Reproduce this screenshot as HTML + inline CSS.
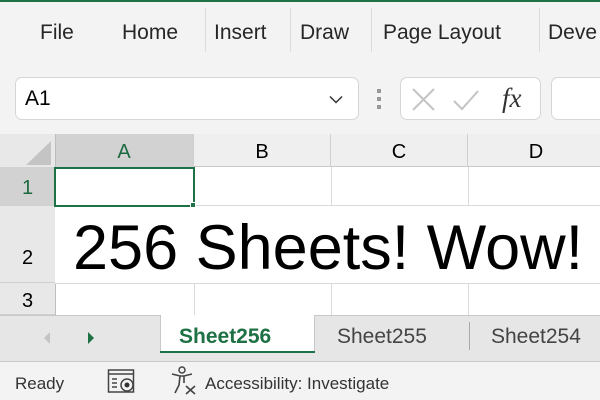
<!DOCTYPE html>
<html><head><style>
*{margin:0;padding:0;box-sizing:border-box}
body{width:600px;height:400px;overflow:hidden;background:#f3f3f3;font-family:"Liberation Sans",sans-serif;position:relative}
.a{position:absolute}
.tab{position:absolute;top:21px;font-size:21px;color:#262626}
.sep{position:absolute;top:8px;width:1px;height:44px;background:#dcdcdc}
.box{position:absolute;background:#fff;border:1px solid #d6d6d6;border-radius:7px}
.ch{position:absolute;top:134px;height:33px;font-size:20px;text-align:center;line-height:36px;color:#000;border-right:1px solid #cfcfcf}
.rh{position:absolute;left:0;width:55px;font-size:20px;text-align:center;color:#000;background:#e8e8e8;border-bottom:1px solid #cfcfcf}
.vl{position:absolute;top:167px;height:148px;width:1px;background:#dadada}
.hl{position:absolute;left:55px;width:545px;height:1px;background:#dadada}
</style></head><body>
<div class="a" style="left:0;top:0;width:600px;height:2px;background:#1e7145"></div>
<div class="tab" style="left:40px">File</div>
<div class="tab" style="left:122px">Home</div>
<div class="sep" style="left:205px"></div>
<div class="tab" style="left:214px">Insert</div>
<div class="sep" style="left:290px"></div>
<div class="tab" style="left:300px">Draw</div>
<div class="sep" style="left:371px"></div>
<div class="tab" style="left:383px">Page Layout</div>
<div class="sep" style="left:539px"></div>
<div class="tab" style="left:548px">Deve</div>

<div class="box" style="left:15px;top:77px;width:344px;height:43px"></div>
<div class="a" style="left:25px;top:87px;font-size:21px;color:#000">A1</div>
<svg class="a" style="left:329px;top:95px" width="14" height="9"><path d="M1 1.5L7 7.5L13 1.5" fill="none" stroke="#333" stroke-width="1.5"/></svg>
<div class="a" style="left:377px;top:89px;width:4px;height:4px;background:#999"></div>
<div class="a" style="left:377px;top:97px;width:4px;height:4px;background:#999"></div>
<div class="a" style="left:377px;top:105px;width:4px;height:4px;background:#999"></div>
<div class="box" style="left:400px;top:77px;width:141px;height:43px"></div>
<svg class="a" style="left:410px;top:86px" width="120" height="28"><path d="M3 3L24 24M24 3L3 24" stroke="#c4c4c4" stroke-width="2"/><path d="M44 15L52 23L68 5" fill="none" stroke="#c4c4c4" stroke-width="2"/></svg>
<div class="a" style="left:502px;top:83px;font-family:'Liberation Serif',serif;font-style:italic;font-size:27px;color:#333">fx</div>
<div class="box" style="left:551px;top:77px;width:60px;height:43px"></div>

<div class="a" style="left:0;top:134px;width:600px;height:181px;background:#fff"></div>
<div class="a" style="left:0;top:134px;width:55px;height:33px;background:#e8e8e8"></div>
<svg class="a" style="left:26px;top:141px" width="26" height="24"><path d="M25 0L25 24L0 24Z" fill="#c4c4c4"/></svg>
<div class="a" style="left:55px;top:134px;width:545px;height:33px;background:#efefef;border-bottom:1px solid #c8c8c8"></div>
<div class="ch" style="left:55px;width:139px;background:#d2d2d2;color:#1e6a40">A</div>
<div class="ch" style="left:194px;width:137px">B</div>
<div class="ch" style="left:331px;width:137px">C</div>
<div class="ch" style="left:468px;width:137px">D</div>
<div class="rh" style="top:167px;height:39px;line-height:42px;background:#d2d2d2;color:#1e6a40">1</div>
<div class="rh" style="top:206px;height:77px;line-height:104px">2</div>
<div class="rh" style="top:283px;height:32px;line-height:36px">3</div>
<div class="a" style="left:55px;top:134px;width:1px;height:181px;background:#bdbdbd"></div>
<div class="vl" style="left:194px"></div>
<div class="vl" style="left:331px"></div>
<div class="vl" style="left:468px"></div>
<div class="hl" style="top:205px"></div>
<div class="hl" style="top:283px"></div>
<div class="a" style="left:55px;top:206px;width:545px;height:77px;background:#fff"></div>
<div class="a" style="left:73px;top:210px;font-size:63px;color:#000;white-space:nowrap;line-height:76px;letter-spacing:0px">256 Sheets! Wow!</div>
<div class="a" style="left:54px;top:167px;width:141px;height:40px;border:2px solid #1e7145"></div>
<div class="a" style="left:190px;top:202px;width:6px;height:6px;background:#1e7145;border:1px solid #fff"></div>

<div class="a" style="left:0;top:315px;width:600px;height:47px;background:#e6e6e6;border-top:1px solid #c8c8c8;border-bottom:1px solid #c8c8c8"></div>
<svg class="a" style="left:40px;top:330px" width="60" height="16"><path d="M10 2L4 8L10 14Z" fill="#c4c4c4"/><path d="M48 2L54 8L48 14Z" fill="#1e7145"/></svg>
<div class="a" style="left:160px;top:315px;width:155px;height:38px;background:#fff;border-left:1px solid #c8c8c8;border-right:1px solid #c8c8c8"></div>
<div class="a" style="left:160px;top:351px;width:155px;height:2px;background:#1e7145"></div>
<div class="a" style="left:179px;top:325px;font-size:21px;font-weight:bold;color:#1e7145">Sheet256</div>
<div class="a" style="left:337px;top:325px;font-size:21px;color:#444">Sheet255</div>
<div class="a" style="left:469px;top:322px;width:1px;height:28px;background:#aaa"></div>
<div class="a" style="left:491px;top:325px;font-size:21px;color:#444">Sheet254</div>

<div class="a" style="left:15px;top:374px;font-size:17px;color:#333">Ready</div>
<svg class="a" style="left:107px;top:368px" width="30" height="28"><rect x="1.5" y="2" width="25" height="22" fill="none" stroke="#444" stroke-width="1.5"/><path d="M1.5 6H26.5M5 11h5M5 15h5M5 19h5" stroke="#444" stroke-width="1.5"/><circle cx="20" cy="17" r="6" fill="#f3f3f3" stroke="#444" stroke-width="1.5"/><circle cx="20" cy="17" r="2.5" fill="#333"/></svg>
<svg class="a" style="left:169px;top:366px" width="30" height="30"><circle cx="13" cy="4" r="3" fill="none" stroke="#444" stroke-width="1.5"/><path d="M3 8L11 10L15 10L23 8M11 10L10 19L6 27M15 10L15 17M17 20L26 28M26 20L17 28" fill="none" stroke="#444" stroke-width="1.6"/></svg>
<div class="a" style="left:205px;top:374px;font-size:17px;color:#333">Accessibility: Investigate</div>
</body></html>
